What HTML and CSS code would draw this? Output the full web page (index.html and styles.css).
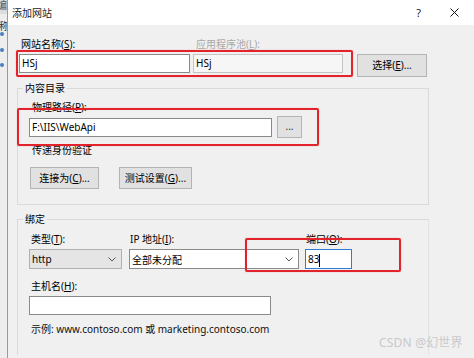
FILE: index.html
```html
<!DOCTYPE html>
<html lang="zh">
<head>
<meta charset="utf-8">
<title>添加网站</title>
<link rel="stylesheet" href="styles.css">
</head>
<body>
<div class="screen">
  <div class="backwin">
    <span class="bw-top">编</span>
    <span class="bw-char">称</span>
    <span class="bw-dot"></span>
    <span class="bw-dot"></span>
    <span class="bw-dot"></span>
  </div>
  <div class="dialog">
    <div class="titlebar">
      <span class="title">添加网站</span>
      <span class="help">?</span>
      <svg class="close" width="9" height="9" viewBox="0 0 9 9"><path d="M0.5 0.5L8.5 8.5M8.5 0.5L0.5 8.5" stroke="#111" stroke-width="1" fill="none"/></svg>
    </div>
    <div class="content">
      <div class="row labels-row1">
        <span class="lbl l-site">网站名称(<u>S</u>):</span>
        <span class="lbl l-pool disabled">应用程序池(<u>L</u>):</span>
      </div>
      <div class="row inputs-row1">
        <div class="input in-site">HSj</div>
        <div class="input in-pool">HSj</div>
        <div class="btn btn-select">选择(<u>E</u>)...</div>
      </div>

      <div class="group g1">
        <span class="gtitle">内容目录</span>
        <span class="lbl l-path">物理路径(<u>P</u>):</span>
        <div class="row path-row">
          <div class="input in-path">F:\IIS\WebApi</div>
          <div class="btn btn-browse">...</div>
        </div>
        <span class="lbl l-auth">传递身份验证</span>
        <div class="row auth-row">
          <div class="btn btn-connect">连接为(<u>C</u>)...</div>
          <div class="btn btn-test">测试设置(<u>G</u>)...</div>
        </div>
      </div>

      <div class="group g2">
        <span class="gtitle">绑定</span>
        <div class="row bind-labels">
          <span class="lbl l-type">类型(<u>T</u>):</span>
          <span class="lbl l-ip">IP 地址(<u>I</u>):</span>
          <span class="lbl l-port">端口(<u>O</u>):</span>
        </div>
        <div class="row bind-controls">
          <div class="select sel-type"><span>http</span><svg width="8" height="5" viewBox="0 0 8 5"><path d="M0.5 0.5L4 4L7.5 0.5" stroke="#555" fill="none"/></svg></div>
          <div class="select sel-ip"><span>全部未分配</span><svg width="8" height="5" viewBox="0 0 8 5"><path d="M0.5 0.5L4 4L7.5 0.5" stroke="#555" fill="none"/></svg></div>
          <div class="input in-port">83<span class="caret"></span></div>
        </div>
        <span class="lbl l-host">主机名(<u>H</u>):</span>
        <div class="input in-host"></div>
        <span class="lbl l-example">示例: www.contoso.com 或 marketing.contoso.com</span>
      </div>
    </div>
  </div>

  <div class="mark m1"></div>
  <div class="mark m2"></div>
  <div class="mark m3"></div>
  <div class="watermark">CSDN @幻世界</div>
</div>
</body>
</html>
```

FILE: styles.css
```css
html, body {
  margin: 0;
  padding: 0;
}
body {
  width: 474px;
  height: 358px;
  overflow: hidden;
  font-family: "Noto Sans", "Noto Sans CJK SC", sans-serif;
  font-size: 10px;
  color: #000;
}
.screen {
  position: relative;
  display: flex;
  width: 474px;
  height: 358px;
  overflow: hidden;
  background: #f0f0f0;
}
.backwin {
  width: 7px;
  flex: none;
  background: #ededed;
  display: flex;
  flex-direction: column;
  overflow: hidden;
}
.bw-top {
  height: 14px;
  line-height: 10px;
  font-size: 10px;
  color: #555;
  background: #dcdcdc;
  margin-left: -3px;
  overflow: hidden;
}
.bw-char {
  margin-top: 6px;
  height: 12px;
  line-height: 12px;
  font-size: 10px;
  color: #333;
  margin-left: -1px;
}
.bw-dot {
  width: 4px;
  height: 4px;
  border-radius: 50%;
  background: #4a7fc0;
}
.bw-dot:nth-of-type(1) { margin-top: 9px; }
.bw-dot + .bw-dot { margin-top: 12px; }
.bw-dot:last-child { margin-top: 11px; }

.dialog {
  flex: 1;
  border-left: 1px solid #9a9a9a;
  background: #f0f0f0;
  display: flex;
  flex-direction: column;
}
.titlebar {
  height: 25px;
  flex: none;
  background: #fff;
  display: flex;
  align-items: center;
  padding: 0 15px 0 4px;
}
.title {
  flex: 1;
  font-size: 10px;
  color: #222;
}
.help {
  font-size: 11px;
  color: #222;
  margin-right: 29px;
}
.close {
  display: block;
}
.content {
  padding: 12px 0 0 11px;
  display: flex;
  flex-direction: column;
  align-items: flex-start;
}
.row {
  display: flex;
}
.lbl {
  display: block;
  line-height: 14px;
  height: 14px;
  white-space: nowrap;
}
u {
  text-decoration: underline;
  text-underline-offset: 1px;
}
.disabled {
  color: #a8a8a8;
}
.l-site {
  width: 172px;
  padding-left: 2px;
}
.l-pool {
  padding-left: 3px;
}
.inputs-row1 {
  margin-top: 3px;
  align-items: flex-start;
}
.input {
  box-sizing: border-box;
  height: 19px;
  line-height: 17px;
  border: 1px solid #8a8a8a;
  background: #fff;
  padding-left: 2px;
  white-space: nowrap;
}
.in-site {
  width: 171px;
}
.in-pool {
  width: 150px;
  margin-left: 3px;
  background: #f6f6f6;
  border-color: #c4c4c4;
}
.btn {
  box-sizing: border-box;
  height: 23px;
  line-height: 21px;
  border: 1px solid #b4b4b4;
  background: #e1e1e1;
  text-align: center;
  white-space: nowrap;
}
.btn-select {
  width: 70px;
  margin-left: 14px;
}
.group {
  box-sizing: border-box;
  width: 412px;
  margin-left: -2px;
  border: 1px solid #dadada;
  padding: 0 0 15px 11px;
  display: flex;
  flex-direction: column;
  align-items: flex-start;
}
.g1 {
  margin-top: 11px;
}
.g2 {
  margin-top: 14px;
  padding-bottom: 19px;
  border-bottom: none;
  border-right-color: #e2e2e2;
}
.gtitle {
  display: block;
  line-height: 14px;
  height: 14px;
  margin-top: -8px;
  margin-left: -6px;
  padding: 0 2px;
  background: #f0f0f0;
}
.l-path {
  margin-top: 5px;
  padding-left: 3px;
}
.path-row {
  margin-top: 2px;
  align-items: center;
}
.in-path {
  width: 243px;
}
.btn-browse {
  width: 25px;
  height: 22px;
  line-height: 18px;
  margin-left: 5px;
  color: #333;
}
.l-auth {
  margin-top: 5px;
  padding-left: 3px;
}
.auth-row {
  margin-top: 10px;
}
.btn-connect {
  width: 69px;
  height: 22px;
  line-height: 20px;
  margin-left: 1px;
}
.btn-test {
  width: 73px;
  height: 22px;
  line-height: 20px;
  margin-left: 20px;
}
.bind-labels {
  margin-top: 6px;
}
.l-type {
  width: 98px;
  padding-left: 2px;
}
.l-ip {
  width: 176px;
  padding-left: 1px;
}
.bind-controls {
  margin-top: 3px;
}
.select {
  box-sizing: border-box;
  height: 20px;
  border: 1px solid #8a8a8a;
  background: #fff;
  display: flex;
  align-items: center;
  justify-content: space-between;
  padding: 0 5px 0 2px;
}
.sel-type {
  width: 93px;
  background: #e5e5e5;
  border-color: #b0b0b0;
}
.sel-ip {
  width: 170px;
  margin-left: 7px;
}
.in-port {
  width: 47px;
  height: 20px;
  line-height: 18px;
  margin-left: 6px;
  border-color: #2a7fd4;
}
.caret {
  display: inline-block;
  width: 1px;
  height: 13px;
  background: #000;
  vertical-align: middle;
}
.l-host {
  margin-top: 10px;
  padding-left: 2px;
}
.in-host {
  width: 242px;
  margin-top: 3px;
}
.l-example {
  margin-top: 7px;
  padding-left: 2px;
  color: #111;
}

.mark {
  position: absolute;
  box-sizing: border-box;
  border: 2px solid #e3232b;
  border-radius: 2px;
  box-shadow: 0 0 1px rgba(230, 60, 60, 0.7);
}
.m1 {
  left: 16px;
  top: 50px;
  width: 337px;
  height: 27px;
}
.m2 {
  left: 17px;
  top: 108px;
  width: 302px;
  height: 38px;
}
.m3 {
  left: 245px;
  top: 238px;
  width: 156px;
  height: 34px;
}
.watermark {
  position: absolute;
  left: 379px;
  top: 336px;
  font-size: 12px;
  line-height: 14px;
  color: #c9c9c9;
  letter-spacing: 0.2px;
}
```
